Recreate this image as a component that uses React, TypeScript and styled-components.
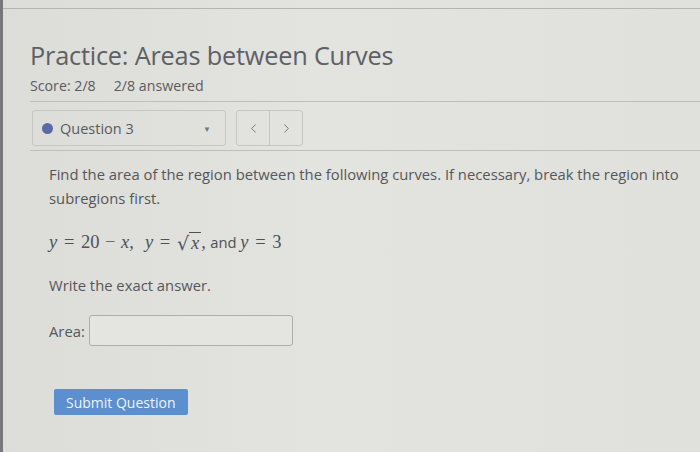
import React from 'react'
import styled, { createGlobalStyle } from 'styled-components'
import { ChevronLeft, ChevronRight } from 'lucide-react'

const GlobalStyle = createGlobalStyle`
  html, body {
    margin: 0;
    padding: 0;
    background: #dfdfdb;
  }
  body {
    font-family: "Open Sans", "Noto Sans", sans-serif;
    color: #595a5c;
  }
`;

const Screen = styled.div`
  width: 700px;
  height: 452px;
  box-sizing: border-box;
  border-left: 3px solid #77787a;
  background: linear-gradient(90deg, #dcdcd8 0%, #e3e3df 45%, #e0e1dc 100%);
  overflow: hidden;
`;

const TopRule = styled.div`
  height: 8px;
  border-bottom: 1px solid #b4b5b2;
`;

const Page = styled.div`
  padding: 28px 0 0 27px;
`;

const Title = styled.h1`
  margin: 0;
  font-size: 25.3px;
  font-weight: 400;
  line-height: 36px;
  color: #5d6066;
  letter-spacing: -0.2px;
`;

const ScoreRow = styled.div`
  display: flex;
  gap: 18px;
  margin-top: 3px;
  font-size: 14.2px;
  line-height: 20px;
  color: #5b5c5e;
`;

const Rule = styled.div`
  height: 0;
  border-top: 1px solid #bebfbc;
`;

const NavBar = styled.div`
  margin-top: 5px;
`;

const NavRow = styled.div`
  display: flex;
  align-items: center;
  gap: 10px;
  padding: 8px 0 4px 2px;
`;

const Select = styled.div`
  width: 194px;
  height: 36px;
  box-sizing: border-box;
  border: 1px solid #c6c7c4;
  border-radius: 3px;
  display: flex;
  align-items: center;
  padding: 0 14px 0 9px;
  font-size: 14.5px;
  color: #595b60;
`;

const Dot = styled.span`
  width: 11px;
  height: 11px;
  border-radius: 50%;
  background: #5b6aa6;
  margin-right: 7px;
`;

const Caret = styled.span`
  margin-left: auto;
  font-size: 8px;
  color: #76777a;
`;

const ButtonGroup = styled.div`
  display: flex;
  height: 36px;
  border: 1px solid #c6c7c4;
  border-radius: 3px;
  box-sizing: border-box;
`;

const NavButton = styled.div<{ $first?: boolean }>`
  width: 32px;
  display: flex;
  align-items: center;
  justify-content: center;
  color: #6a6b6e;
  border-left: ${p => (p.$first ? 'none' : '1px solid #c6c7c4')};
`;

const Question = styled.div`
  padding: 11px 20px 0 19px;
  font-size: 14.8px;
  line-height: 24px;
  color: #56575a;
`;

const Para = styled.p`
  margin: 0 0 18px;
`;

const MathLine = styled.div`
  margin: 20px 0 19px;
  font-family: "Liberation Serif", "DejaVu Serif", serif;
  font-size: 18.5px;
  line-height: 24px;
  color: #505154;
`;

const V = styled.i`
  font-family: "Liberation Serif", serif;
`;

const Op = styled.span<{ $rel?: boolean }>`
  margin: 0 ${p => (p.$rel ? '0.36em' : '0.3em')};
`;

const Plain = styled.span`
  font-family: "Open Sans", sans-serif;
  font-size: 14.8px;
  margin: 0 0.25em 0 0.3em;
`;

const Sqrt = styled.span`
  display: inline-flex;
  align-items: flex-end;
  vertical-align: bottom;
`;

const Radical = styled.span`
  font-family: "DejaVu Serif", serif;
  font-size: 19px;
  line-height: 22px;
`;

const Radicand = styled.span`
  border-top: 1px solid #505154;
  padding: 0 2px;
  line-height: 20px;
  margin-bottom: 1px;
`;

const AnswerRow = styled.div`
  display: flex;
  align-items: center;
  gap: 4px;
  margin-top: 14px;
`;

const Input = styled.div`
  width: 204px;
  height: 31px;
  box-sizing: border-box;
  border: 1px solid #adaeab;
  border-radius: 3px;
  background: #e4e4e0;
`;

const Submit = styled.button`
  margin: 43px 0 0 5px;
  padding: 0 12px;
  height: 26px;
  border: none;
  border-radius: 2px;
  background: #5b8fcf;
  color: #eef3fa;
  font-family: "Open Sans", sans-serif;
  font-size: 14px;
`;

export default function App() {
  return (
    <>
      <GlobalStyle />
      <Screen>
        <TopRule />
        <Page>
          <Title>Practice: Areas between Curves</Title>
          <ScoreRow>
            <span>Score: 2/8</span>
            <span>2/8 answered</span>
          </ScoreRow>
          <NavBar>
            <Rule />
            <NavRow>
              <Select>
                <Dot />
                Question 3
                <Caret>▼</Caret>
              </Select>
              <ButtonGroup>
                <NavButton $first>
                  <ChevronLeft size={15} strokeWidth={1.4} />
                </NavButton>
                <NavButton>
                  <ChevronRight size={15} strokeWidth={1.4} />
                </NavButton>
              </ButtonGroup>
            </NavRow>
            <Rule />
          </NavBar>
          <Question>
            <Para>
              Find the area of the region between the following curves. If necessary, break the region into subregions first.
            </Para>
            <MathLine>
              <V>y</V>
              <Op $rel>=</Op>20<Op>−</Op>
              <V>x</V>,<Op />
              <V>y</V>
              <Op $rel>=</Op>
              <Sqrt>
                <Radical>√</Radical>
                <Radicand>
                  <V>x</V>
                </Radicand>
              </Sqrt>
              ,<Plain>and</Plain>
              <V>y</V>
              <Op $rel>=</Op>3
            </MathLine>
            <Para>Write the exact answer.</Para>
            <AnswerRow>
              <span>Area:</span>
              <Input />
            </AnswerRow>
            <Submit>Submit Question</Submit>
          </Question>
        </Page>
      </Screen>
    </>
  )
}
